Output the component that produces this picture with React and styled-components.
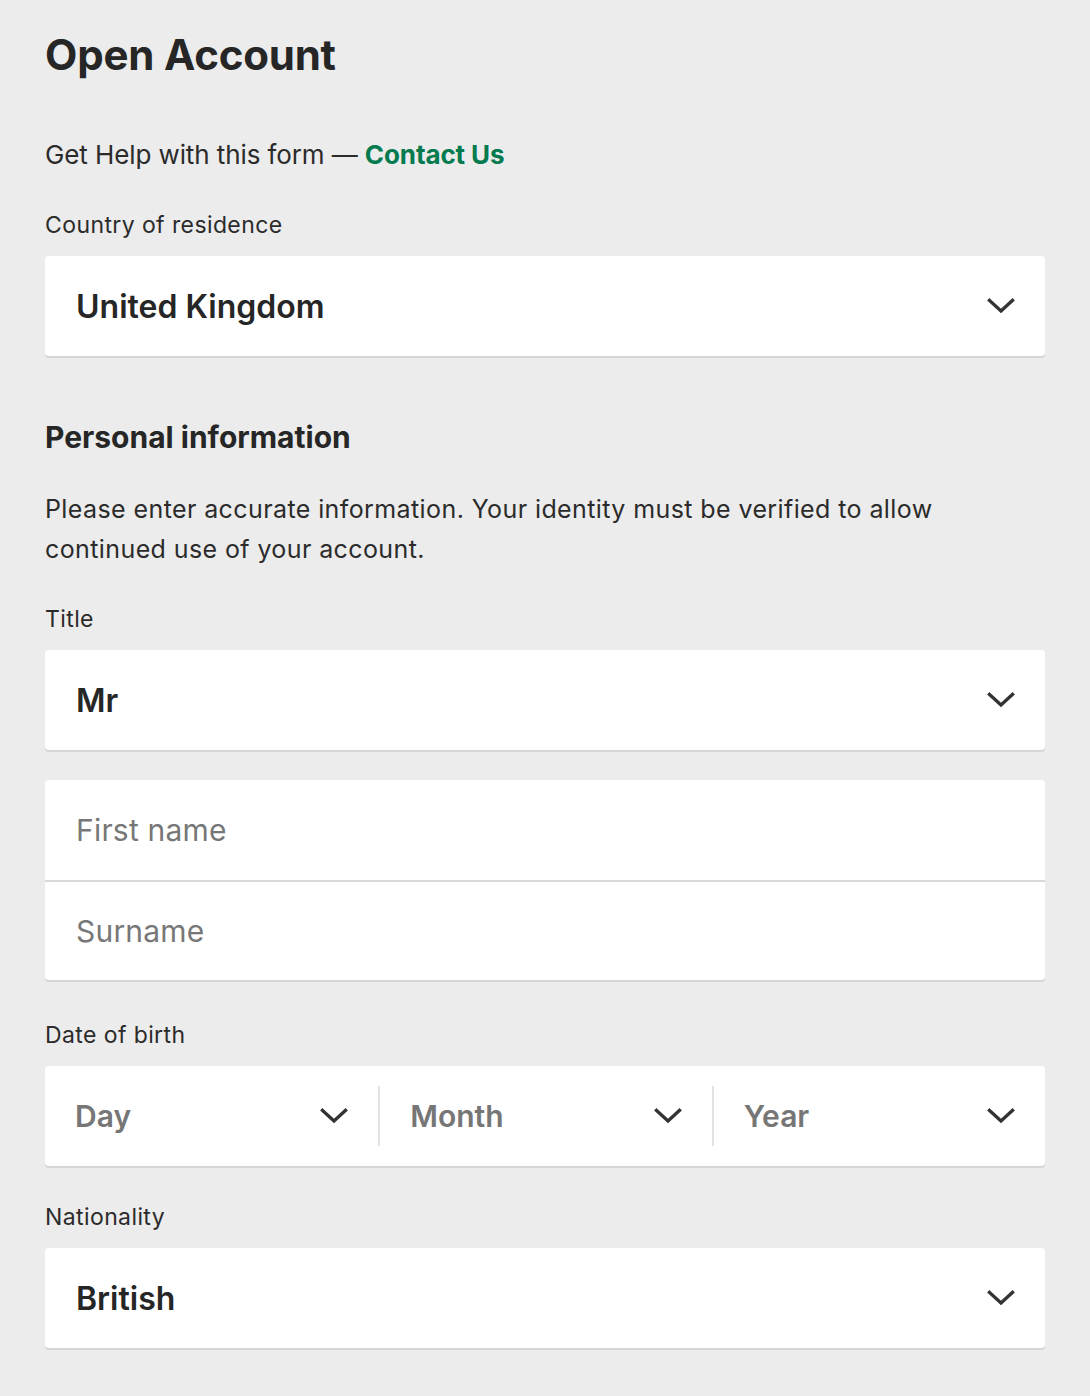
import React from "react";
import styled, { createGlobalStyle } from "styled-components";

const GlobalStyle = createGlobalStyle`
  html, body {
    margin: 0;
    padding: 0;
    background: #ebeceb;
  }
  body {
    font-family: Inter, "Noto Sans", "Liberation Sans", sans-serif;
    color: #262626;
    -webkit-font-smoothing: antialiased;
  }
`;

const Page = styled.main`
  padding: 28px 45px 48px;
  display: flex;
  flex-direction: column;
`;

const Title = styled.h1`
  margin: 0;
  font-size: 42px;
  line-height: 53px;
  font-weight: 700;
  letter-spacing: -0.2px;
  color: #262626;
`;

const Help = styled.p`
  margin: 56px 0 0;
  font-size: 26px;
  line-height: 36px;
  letter-spacing: -0.1px;
  color: #2b2b2b;
  a {
    color: #047a4f;
    font-weight: 700;
    text-decoration: none;
  }
`;

const Label = styled.div`
  margin-top: ${(p) => p.$top || 36}px;
  margin-bottom: 15px;
  font-size: 23px;
  line-height: 32px;
  letter-spacing: 0.4px;
  color: #2b2b2b;
`;

const SectionTitle = styled.h2`
  margin: 61px 0 0;
  font-size: 30px;
  line-height: 36px;
  font-weight: 700;
  color: #262626;
`;

const Para = styled.p`
  margin: 34px 0 0;
  font-size: 25px;
  line-height: 40px;
  letter-spacing: 0.4px;
  color: #2b2b2b;
`;

const Box = styled.div`
  background: #fff;
  border-radius: 4px;
  box-shadow: 0 2px 0 #d6d6d6;
  margin-bottom: 2px;
  margin-top: ${(p) => p.$top || 0}px;
`;

const SelectRow = styled.div`
  height: 100px;
  display: flex;
  align-items: center;
  justify-content: space-between;
  padding: 0 30px 0 31px;
`;

const SelectValue = styled.span`
  font-size: 32px;
  font-weight: 600;
  color: #262626;
`;

const InputRow = styled.div`
  box-sizing: border-box;
  height: 100px;
  display: flex;
  align-items: center;
  padding: 0 31px;
  font-size: 30px;
  letter-spacing: 0.2px;
  color: #777;
  & + & {
    border-top: 2px solid #d9d9d9;
  }
`;

const DateRow = styled.div`
  height: 100px;
  display: grid;
  grid-template-columns: repeat(3, 1fr);
  align-items: center;
`;

const DateCell = styled.div`
  height: 60px;
  display: flex;
  align-items: center;
  justify-content: space-between;
  padding: 0 30px 0 30px;
  border-left: ${(p) => (p.$first ? "none" : "2px solid #e3e3e3")};
  font-size: 30px;
  font-weight: 600;
  color: #767676;
`;

const Chevron = () => (
  <svg width="28" height="16" viewBox="0 0 28 16" fill="none">
    <polyline
      points="2.5,2.5 14,13 25.5,2.5"
      stroke="#333"
      strokeWidth="3.4"
      strokeLinecap="square"
    />
  </svg>
);

const Select = ({ value, top }) => (
  <Box $top={top}>
    <SelectRow>
      <SelectValue>{value}</SelectValue>
      <Chevron />
    </SelectRow>
  </Box>
);

export default function App() {
  return (
    <>
      <GlobalStyle />
      <Page>
        <Title>Open Account</Title>
        <Help>
          Get Help with this form — <a href="#">Contact Us</a>
        </Help>

        <Label $top={36}>Country of residence</Label>
        <Select value="United Kingdom" />

        <SectionTitle>Personal information</SectionTitle>
        <Para>
          Please enter accurate information. Your identity must be verified to allow
          continued use of your account.
        </Para>

        <Label $top={34}>Title</Label>
        <Select value="Mr" />

        <Box $top={28}>
          <InputRow>First name</InputRow>
          <InputRow>Surname</InputRow>
        </Box>

        <Label $top={37}>Date of birth</Label>
        <Box>
          <DateRow>
            {["Day", "Month", "Year"].map((d, i) => (
              <DateCell key={d} $first={i === 0}>
                {d}
                <Chevron />
              </DateCell>
            ))}
          </DateRow>
        </Box>

        <Label $top={33}>Nationality</Label>
        <Select value="British" />
      </Page>
    </>
  );
}
